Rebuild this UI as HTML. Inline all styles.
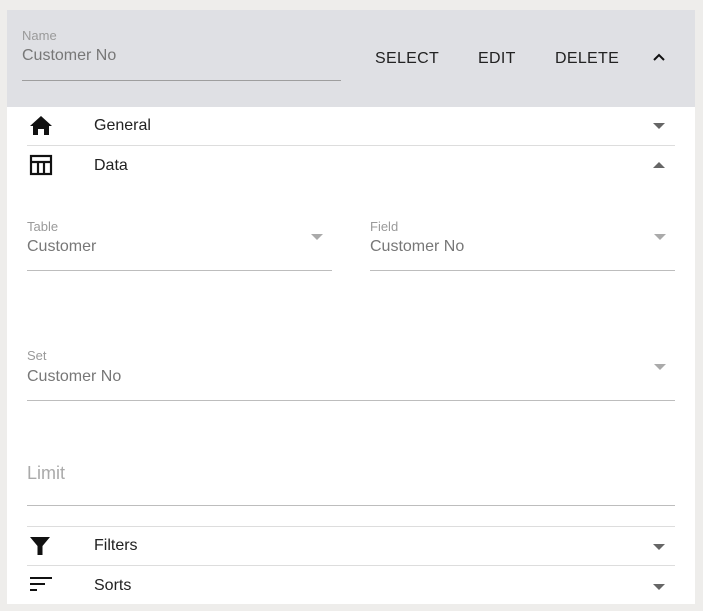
<!DOCTYPE html>
<html><head><meta charset="utf-8"><style>
body{margin:0;width:703px;height:611px;background:#eeedeb;font-family:"Liberation Sans",sans-serif;position:relative;overflow:hidden}
.card{position:absolute;left:7px;top:10px;width:688px;height:594px;background:#fff}
.hdr{position:absolute;left:0;top:0;width:688px;height:97px;background:#dfe0e4}
.a{position:absolute;white-space:nowrap}
.lbl{font-size:13px;color:#9a9a9a}
.val{font-size:16px;color:#777}
.line{position:absolute;height:1px;background:#bdbdbd}
.div{position:absolute;left:20px;width:648px;height:1px;background:#ddd}
.t{font-size:16px;color:#222}
.btn{font-size:16px;color:#222;letter-spacing:.3px}
.tri{position:absolute;width:0;height:0;border-left:6px solid transparent;border-right:6px solid transparent}
.dn{border-top:6px solid #666}
.up{border-bottom:6px solid #666}
.dl{border-top:6px solid #aaa}
</style></head><body>
<div class="card">
<div class="hdr">
 <div class="a lbl" style="left:15px;top:18px">Name</div>
 <div class="a val" style="left:15px;top:37px">Customer No</div>
 <div class="line" style="left:15px;top:70px;width:319px;background:#9e9e9e"></div>
 <div class="a btn" style="left:368px;top:40px">SELECT</div>
 <div class="a btn" style="left:471px;top:40px">EDIT</div>
 <div class="a btn" style="left:548px;top:40px">DELETE</div>
 <svg class="a" style="left:645px;top:42px" width="14" height="10" viewBox="0 0 14 10"><path d="M2 8 L7 3 L12 8" fill="none" stroke="#111" stroke-width="2"/></svg>
</div>
<svg class="a" style="left:22px;top:104px" width="24" height="22" viewBox="0 0 24 22"><path d="M12 2 L1 12 H4 V21 H9 V15 H15 V21 H20 V12 H23 Z" fill="#111"/></svg>
<div class="a t" style="left:87px;top:107px">General</div>
<div class="tri dn" style="left:646px;top:113px"></div>
<div class="div" style="top:135px"></div>
<svg class="a" style="left:22px;top:144px" width="24" height="22" viewBox="0 0 24 22"><rect x="2" y="2" width="20" height="18" fill="none" stroke="#111" stroke-width="2.2"/><path d="M2 8 H22 M9 8 V20 M15 8 V20" stroke="#111" stroke-width="2.2"/></svg>
<div class="a t" style="left:87px;top:147px">Data</div>
<div class="tri up" style="left:646px;top:152px"></div>

<div class="a lbl" style="left:20px;top:209px">Table</div>
<div class="a val" style="left:20px;top:228px">Customer</div>
<div class="tri dl" style="left:304px;top:224px"></div>
<div class="line" style="left:20px;top:260px;width:305px"></div>

<div class="a lbl" style="left:363px;top:209px">Field</div>
<div class="a val" style="left:363px;top:228px">Customer No</div>
<div class="tri dl" style="left:647px;top:224px"></div>
<div class="line" style="left:363px;top:260px;width:305px"></div>

<div class="a lbl" style="left:20px;top:338px">Set</div>
<div class="a val" style="left:20px;top:358px">Customer No</div>
<div class="tri dl" style="left:647px;top:354px"></div>
<div class="line" style="left:20px;top:390px;width:648px"></div>

<div class="a" style="left:20px;top:453px;font-size:18px;color:#aaa">Limit</div>
<div class="line" style="left:20px;top:495px;width:648px"></div>

<div class="div" style="top:516px"></div>
<svg class="a" style="left:22px;top:526px" width="22" height="20" viewBox="0 0 22 20"><path d="M1 1 H21 L13.5 10 V19 H8.5 V10 Z" fill="#111"/></svg>
<div class="a t" style="left:87px;top:527px">Filters</div>
<div class="tri dn" style="left:646px;top:534px"></div>
<div class="div" style="top:555px"></div>
<svg class="a" style="left:22px;top:566px" width="24" height="16" viewBox="0 0 24 16"><path d="M1 2 H23 M1 8 H16 M1 14 H8" stroke="#111" stroke-width="2"/></svg>
<div class="a t" style="left:87px;top:567px">Sorts</div>
<div class="tri dn" style="left:646px;top:574px"></div>
</div>
</body></html>
